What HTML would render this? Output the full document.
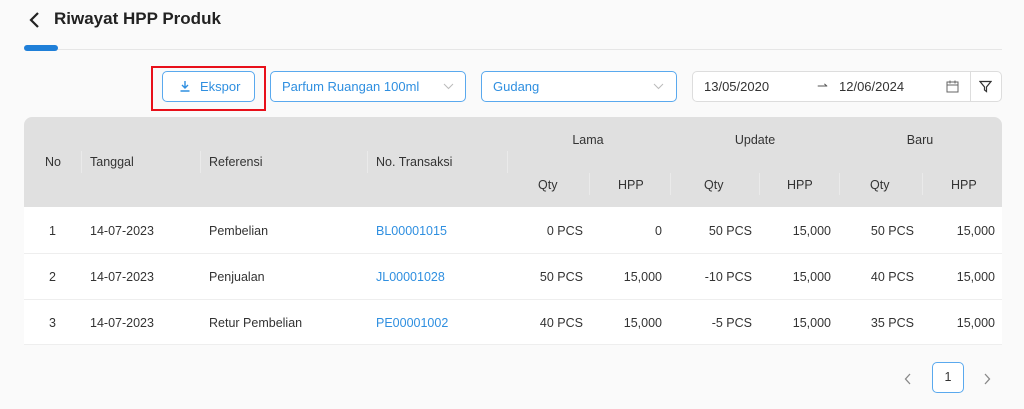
<!DOCTYPE html>
<html><head><style>
*{margin:0;padding:0;box-sizing:border-box}
body{width:1024px;height:409px;background:#fafafa;font-family:"Liberation Sans",sans-serif;color:#333;position:relative;overflow:hidden;font-size:12.5px}
.a{position:absolute;white-space:nowrap}
.box{position:absolute;border:1px solid #5aa9ee;border-radius:5px;background:#fff}
.r{text-align:right}
.c{text-align:center}
.sep{position:absolute;width:1px;background:#eaeaea}
.link{color:#2f8fe0}
</style></head><body>
<svg class="a" style="left:28px;top:11px" width="14" height="18" viewBox="0 0 14 18"><path d="M10 2L3 9l7 7" stroke="#222" stroke-width="2.2" fill="none"/></svg>
<div class="a" style="left:54px;top:9px;font-size:17px;font-weight:bold;color:#222">Riwayat HPP Produk</div>
<div class="a" style="left:24px;top:49px;width:978px;height:1px;background:#e6e6e6"></div>
<div class="a" style="left:24px;top:45px;width:34px;height:6px;border-radius:3px;background:#1f7fd8"></div>

<div class="a" style="left:151px;top:66px;width:115px;height:45px;border:2px solid #e8101a"></div>
<div class="box" style="left:162px;top:71px;width:93px;height:31px"></div>
<svg class="a" style="left:179px;top:80px" width="12" height="12" viewBox="0 0 12 12"><path d="M6 1v7M3 5l3 3 3-3M1.5 11h9" stroke="#2f8fe0" stroke-width="1.4" fill="none"/></svg>
<div class="a link" style="left:200px;top:79px;font-size:13px">Ekspor</div>

<div class="box" style="left:270px;top:71px;width:196px;height:31px"></div>
<div class="a link" style="left:282px;top:79px;font-size:13px">Parfum Ruangan 100ml</div>
<svg class="a" style="left:443px;top:83px" width="11" height="7" viewBox="0 0 11 7"><path d="M1 1l4.5 4.5L10 1" stroke="#bbb" fill="none"/></svg>
<div class="box" style="left:481px;top:71px;width:196px;height:31px;border-width:1.5px"></div>
<div class="a link" style="left:493px;top:79px;font-size:13px">Gudang</div>
<svg class="a" style="left:653px;top:83px" width="11" height="7" viewBox="0 0 11 7"><path d="M1 1l4.5 4.5L10 1" stroke="#bbb" fill="none"/></svg>

<div class="a" style="left:692px;top:71px;width:279px;height:31px;border:1px solid #ddd;border-radius:5px 0 0 5px;background:#fff"></div>
<div class="a" style="left:704px;top:79px;font-size:13px">13/05/2020</div>
<div class="a" style="left:817px;top:78px;font-size:13px;color:#555">⇀</div>
<div class="a" style="left:839px;top:79px;font-size:13px">12/06/2024</div>
<svg class="a" style="left:946px;top:80px" width="13" height="13" viewBox="0 0 13 13"><rect x="1" y="2" width="11" height="10" fill="none" stroke="#666"/><path d="M1 5h11M4 0.5v3M9 0.5v3" stroke="#666"/></svg>
<div class="a" style="left:970px;top:71px;width:32px;height:31px;border:1px solid #ddd;border-radius:0 5px 5px 0;background:#fff"></div>
<svg class="a" style="left:979px;top:80px" width="13" height="13" viewBox="0 0 13 13"><path d="M1 1.5h11L7.5 7v4.5L5.5 10V7z" fill="none" stroke="#333" stroke-width="1.2"/></svg>

<div class="a" style="left:24px;top:117px;width:978px;height:90px;background:#e0e0e0;border-radius:8px 8px 0 0"></div>
<div class="a" style="left:24px;top:207px;width:978px;height:138px;background:#fff"></div>
<div class="a" style="left:24px;top:253px;width:978px;height:1px;background:#eee"></div>
<div class="a" style="left:24px;top:299px;width:978px;height:1px;background:#eee"></div>
<div class="a" style="left:24px;top:344px;width:978px;height:1px;background:#eee"></div>
<div class="sep" style="left:81px;top:151px;height:22px"></div>
<div class="sep" style="left:200px;top:151px;height:22px"></div>
<div class="sep" style="left:367px;top:151px;height:22px"></div>
<div class="sep" style="left:507px;top:151px;height:22px"></div>
<div class="sep" style="left:589px;top:173px;height:22px"></div>
<div class="sep" style="left:670px;top:173px;height:22px"></div>
<div class="sep" style="left:759px;top:173px;height:22px"></div>
<div class="sep" style="left:839px;top:173px;height:22px"></div>
<div class="sep" style="left:922px;top:173px;height:22px"></div>

<div class="a" style="left:45px;top:155px">No</div>
<div class="a" style="left:90px;top:155px">Tanggal</div>
<div class="a" style="left:209px;top:155px">Referensi</div>
<div class="a" style="left:376px;top:155px">No. Transaksi</div>
<div class="a c" style="left:548px;top:133px;width:80px">Lama</div>
<div class="a c" style="left:715px;top:133px;width:80px">Update</div>
<div class="a c" style="left:880px;top:133px;width:80px">Baru</div>
<div class="a" style="left:538px;top:178px">Qty</div>
<div class="a" style="left:618px;top:178px">HPP</div>
<div class="a" style="left:704px;top:178px">Qty</div>
<div class="a" style="left:787px;top:178px">HPP</div>
<div class="a" style="left:870px;top:178px">Qty</div>
<div class="a" style="left:951px;top:178px">HPP</div>

<div class="a" style="left:49px;top:224px">1</div><div class="a" style="left:90px;top:224px">14-07-2023</div><div class="a" style="left:209px;top:224px">Pembelian</div><div class="a link" style="left:376px;top:224px">BL00001015</div>
<div class="a r" style="right:441px;top:224px">0 PCS</div><div class="a r" style="right:362px;top:224px">0</div><div class="a r" style="right:272px;top:224px">50 PCS</div><div class="a r" style="right:193px;top:224px">15,000</div><div class="a r" style="right:110px;top:224px">50 PCS</div><div class="a r" style="right:29px;top:224px">15,000</div>

<div class="a" style="left:49px;top:270px">2</div><div class="a" style="left:90px;top:270px">14-07-2023</div><div class="a" style="left:209px;top:270px">Penjualan</div><div class="a link" style="left:376px;top:270px">JL00001028</div>
<div class="a r" style="right:441px;top:270px">50 PCS</div><div class="a r" style="right:362px;top:270px">15,000</div><div class="a r" style="right:272px;top:270px">-10 PCS</div><div class="a r" style="right:193px;top:270px">15,000</div><div class="a r" style="right:110px;top:270px">40 PCS</div><div class="a r" style="right:29px;top:270px">15,000</div>

<div class="a" style="left:49px;top:316px">3</div><div class="a" style="left:90px;top:316px">14-07-2023</div><div class="a" style="left:209px;top:316px">Retur Pembelian</div><div class="a link" style="left:376px;top:316px">PE00001002</div>
<div class="a r" style="right:441px;top:316px">40 PCS</div><div class="a r" style="right:362px;top:316px">15,000</div><div class="a r" style="right:272px;top:316px">-5 PCS</div><div class="a r" style="right:193px;top:316px">15,000</div><div class="a r" style="right:110px;top:316px">35 PCS</div><div class="a r" style="right:29px;top:316px">15,000</div>

<svg class="a" style="left:904px;top:373px" width="8" height="12" viewBox="0 0 8 12"><path d="M6 1L1.5 6 6 11" stroke="#888" stroke-width="1.3" fill="none"/></svg>
<div class="box" style="left:932px;top:362px;width:32px;height:31px;border-radius:5px"></div>
<div class="a c" style="left:932px;top:370px;width:32px">1</div>
<svg class="a" style="left:983px;top:373px" width="8" height="12" viewBox="0 0 8 12"><path d="M2 1l4.5 5L2 11" stroke="#888" stroke-width="1.3" fill="none"/></svg>
</body></html>
